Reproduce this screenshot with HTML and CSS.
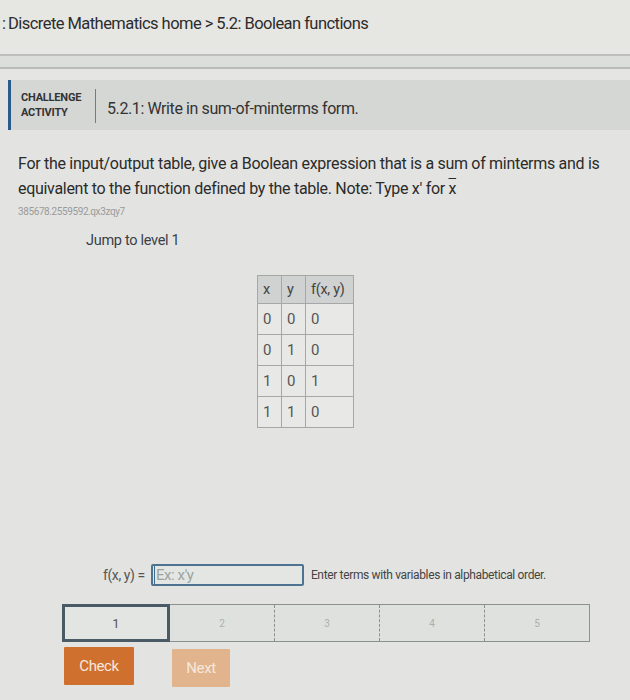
FILE: index.html
```html
<!DOCTYPE html>
<html>
<head>
<meta charset="utf-8">
<link rel="stylesheet" href="styles.css">
</head>
<body>
<div class="page">
  <header class="topbar">
    <div class="crumbs"><span class="cut">:</span>Discrete Mathematics home &gt; 5.2: Boolean functions</div>
  </header>
  <div class="band"></div>
  <div class="band2"></div>
  <section class="challenge">
    <div class="label">CHALLENGE<br>ACTIVITY</div>
    <div class="sep"></div>
    <div class="title">5.2.1: Write in sum-of-minterms form.</div>
  </section>
  <div class="content">
    <p class="prompt">For the input/output table, give a Boolean expression that is a sum of minterms and is equivalent to the function defined by the table. Note: Type x' for <span class="over">x</span></p>
    <div class="id">385678.2559592.qx3zqy7</div>
    <div class="jump">Jump to level 1</div>
    <div class="tablewrap">
      <table class="truth">
        <tr class="head"><td>x</td><td>y</td><td class="f">f(x, y)</td></tr>
        <tr><td>0</td><td>0</td><td class="f">0</td></tr>
        <tr><td>0</td><td>1</td><td class="f">0</td></tr>
        <tr><td>1</td><td>0</td><td class="f">1</td></tr>
        <tr><td>1</td><td>1</td><td class="f">0</td></tr>
      </table>
    </div>
    <div class="answer">
      <span class="fx">f(x, y) =</span>
      <div class="input"><span class="ph">Ex: x'y</span></div>
      <span class="hint">Enter terms with variables in alphabetical order.</span>
    </div>
    <div class="levels">
      <div class="lvl active">1</div>
      <div class="lvl">2</div>
      <div class="lvl dash">3</div>
      <div class="lvl dash">4</div>
      <div class="lvl dash">5</div>
    </div>
    <div class="buttons">
      <button class="btn check">Check</button>
      <button class="btn next">Next</button>
    </div>
  </div>
</div>
</body>
</html>
```
FILE: styles.css
```css
html, body {
  margin: 0;
  padding: 0;
}
body {
  background: #e3e4e1;
  font-family: Roboto, "Liberation Sans", sans-serif;
  color: #333;
  width: 630px;
  height: 700px;
  overflow: hidden;
}
.page {
  display: flex;
  flex-direction: column;
}
.topbar {
  height: 54px;
  background: #e6e6e3;
  display: flex;
  align-items: center;
  border-bottom: 2px solid #bdbfbd;
}
.crumbs {
  font-size: 16.5px;
  letter-spacing: -0.55px;
  color: #2c2c2c;
  padding-left: 2px;
  margin-top: -8px;
}
.cut {
  display: inline-block;
  width: 6px;
}
.band {
  height: 11px;
  background: #dcdedc;
  border-bottom: 2px solid #b9bbb9;
}
.band2 {
  height: 11px;
  background: #e5e6e3;
}
.challenge {
  margin-left: 8px;
  height: 50px;
  background: #d5d7d5;
  border-left: 3px solid #2a5a8a;
  display: flex;
  align-items: center;
}
.label {
  font-size: 11px;
  font-weight: bold;
  line-height: 15px;
  color: #333;
  padding-left: 10px;
  width: 72px;
  letter-spacing: -0.2px;
}
.sep {
  width: 1px;
  height: 34px;
  background: #7a7a7a;
  margin-left: 2px;
  margin-top: 2px;
}
.title {
  font-size: 16px;
  color: #333;
  margin-left: 11px;
  margin-top: 6px;
  letter-spacing: -0.4px;
}
.content {
  padding-left: 18px;
  display: flex;
  flex-direction: column;
}
.prompt {
  margin: 21px 0 0 0;
  font-size: 16px;
  line-height: 25px;
  letter-spacing: -0.3px;
  color: #2b2b2b;
  width: 605px;
}
.over {
  text-decoration: overline;
  text-decoration-thickness: 1px;
}
.id {
  font-size: 10px;
  color: #9a9a9a;
  margin-top: 5px;
  letter-spacing: -0.4px;
}
.jump {
  font-size: 14.5px;
  color: #3a4048;
  margin-top: 15px;
  margin-left: 68px;
  letter-spacing: -0.3px;
}
.tablewrap {
  margin-top: 26px;
  margin-left: 239px;
}
.truth {
  border-collapse: collapse;
  border: 1.5px solid #8f9290;
  font-size: 15px;
  color: #555;
}
.truth td {
  border: 1px solid #a5a8a6;
  height: 31px;
  width: 24px;
  padding: 0 0 0 5px;
  box-sizing: border-box;
}
.truth td.f {
  width: 48px;
}
.truth tr.head td {
  background: #cfd2d0;
  height: 28px;
  font-size: 14.5px;
  color: #444;
  letter-spacing: -0.3px;
}
.truth tr:not(.head) td {
  background: #e8e9e6;
}
.answer {
  margin-top: 136px;
  margin-left: 85px;
  display: flex;
  align-items: center;
}
.fx {
  font-size: 14px;
  color: #555;
  letter-spacing: -0.4px;
}
.input {
  margin-left: 6px;
  width: 153px;
  height: 22px;
  box-sizing: border-box;
  border: 2px solid #4d7390;
  border-radius: 2px;
  background: #e4e6e3;
  display: flex;
  align-items: center;
  padding-left: 5px;
}
.ph {
  font-size: 15px;
  color: #9aa3a0;
  letter-spacing: -0.4px;
  border-left: 1px solid #3a6a8a;
  padding-left: 1px;
  margin-left: -4px;
}
.hint {
  margin-left: 7px;
  font-size: 12px;
  color: #444;
  letter-spacing: -0.35px;
}
.levels {
  margin-top: 18px;
  margin-left: 44px;
  width: 526px;
  height: 36px;
  border: 1px solid #8c9090;
  display: flex;
  background: #dfe1de;
}
.lvl {
  flex: 1;
  display: flex;
  align-items: center;
  justify-content: center;
  font-size: 10px;
  color: #aab0ae;
}
.lvl.dash {
  border-left: 1px dashed #8c9090;
}
.lvl.active {
  flex: 0 0 108px;
  box-sizing: border-box;
  border: 3px solid #4a5a66;
  margin: -1px 0 -1px -1px;
  font-size: 13px;
  color: #555;
  background: #e3e5e2;
}
.buttons {
  margin-top: 5px;
  margin-left: 46px;
  display: flex;
  gap: 38px;
}
.btn {
  font-family: Roboto, "Liberation Sans", sans-serif;
  border: none;
  color: #f6e8dc;
  font-size: 15px;
  letter-spacing: -0.4px;
  height: 38px;
  border-radius: 1px;
}
.check {
  width: 70px;
  background: #d0702f;
}
.next {
  width: 58px;
  background: #e1b48d;
  margin-top: 2px;
}
```
